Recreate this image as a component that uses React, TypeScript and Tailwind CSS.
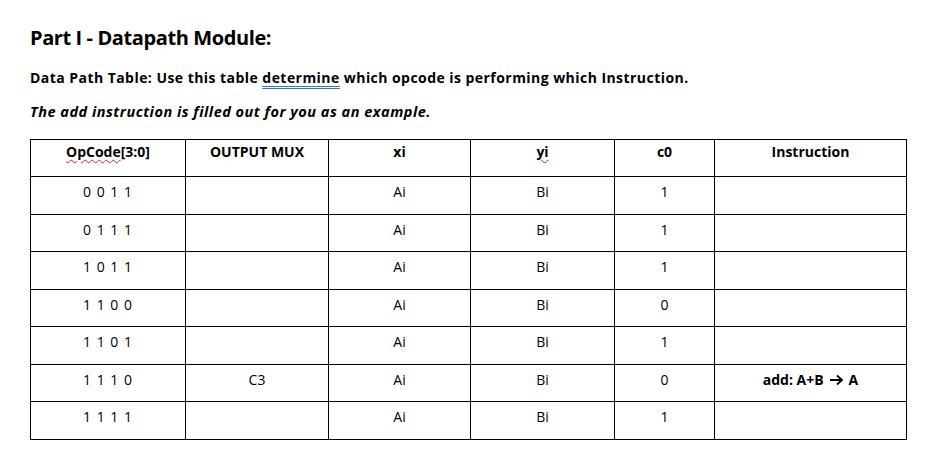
const rows = [
  { op: '0 0 1 1', mux: '', c0: '1', ins: false },
  { op: '0 1 1 1', mux: '', c0: '1', ins: false },
  { op: '1 0 1 1', mux: '', c0: '1', ins: false },
  { op: '1 1 0 0', mux: '', c0: '0', ins: false },
  { op: '1 1 0 1', mux: '', c0: '1', ins: false },
  { op: '1 1 1 0', mux: 'C3', c0: '0', ins: true },
  { op: '1 1 1 1', mux: '', c0: '1', ins: false },
]

const Arrow = (): JSX.Element => (
  <svg width="15" height="12" viewBox="0 0 15 12" className="inline-block align-[-1px] mx-[5px]">
    <path d="M1 6 H13 M8 1.5 L13 6 L8 10.5" fill="none" stroke="black" strokeWidth="1.8" />
  </svg>
)

const Header = (): JSX.Element => (
  <tr className="h-[37px] align-top font-bold text-[14px]">
    <th className="border border-black w-[155px] pt-[1px]">
      <span className="underline decoration-wavy decoration-[#e02020] decoration-1 underline-offset-2">OpCode</span>[3:0]
    </th>
    <th className="border border-black w-[143px] pt-[1px]">OUTPUT MUX</th>
    <th className="border border-black w-[142px] pt-[1px]">xi</th>
    <th className="border border-black w-[144px] pt-[1px]">
      <span className="underline decoration-wavy decoration-[#e02020] decoration-1 underline-offset-2">yi</span>
    </th>
    <th className="border border-black w-[100px] pt-[1px]">c0</th>
    <th className="border border-black w-[192px] pt-[1px]">Instruction</th>
  </tr>
)

export default function App() {
  return (
    <div className="w-[946px] h-[469px] bg-white text-black overflow-hidden font-['Open_Sans',sans-serif]">
      <div className="pl-[30px] pt-[24px]">
        <h1 className="text-[20px] font-bold leading-[28px] tracking-[-0.4px]">Part I - Datapath Module:</h1>
        <p className="mt-[16px] text-[14px] font-bold leading-[20px] tracking-[0.45px]">
          Data Path Table: Use this table{' '}
          <span className="underline decoration-double decoration-[#2f6fe8] decoration-1 underline-offset-3">determine</span>{' '}
          which opcode is performing which Instruction.
        </p>
        <p className="mt-[14px] text-[14.5px] font-bold italic leading-[20px] tracking-[0.5px]">
          The add instruction is filled out for you as an example.
        </p>
        <table className="mt-[17px] border-collapse table-fixed text-[14px]">
          <tbody>
            <Header />
            {rows.map((r, i) => (
              <tr key={`row-${i}`} className="h-[37.5px] align-top text-center">
                <td className="border border-black pt-[4px] tracking-[1px]">{r.op}</td>
                <td className="border border-black pt-[4px]">{r.mux}</td>
                <td className="border border-black pt-[4px]">Ai</td>
                <td className="border border-black pt-[4px]">Bi</td>
                <td className="border border-black pt-[4px]">{r.c0}</td>
                <td className="border border-black pt-[4px] font-bold">
                  {r.ins && (
                    <span>
                      add: A+B<Arrow />A
                    </span>
                  )}
                </td>
              </tr>
            ))}
          </tbody>
        </table>
      </div>
    </div>
  )
}
